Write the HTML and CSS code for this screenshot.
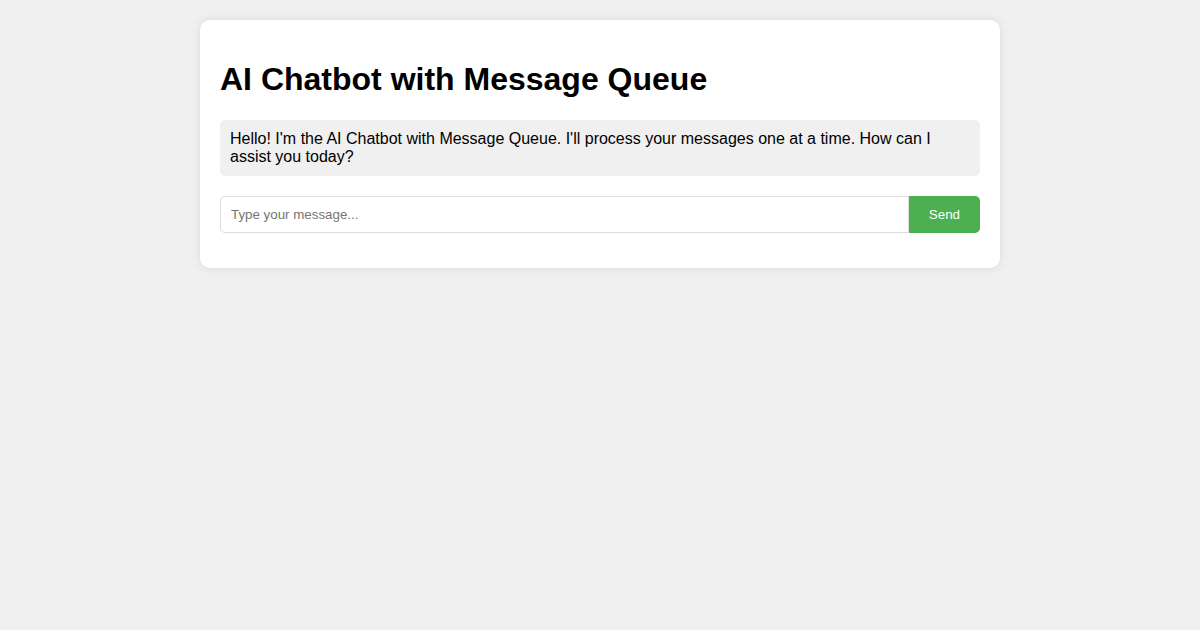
FILE: index.html
```html
<!DOCTYPE html>
<html>
<head>
<meta charset="utf-8">
<link rel="stylesheet" href="styles.css">
</head>
<body>
<div class="container">
  <h1>AI Chatbot with Message Queue</h1>
  <div class="chat-box">
    <div class="message bot">Hello! I'm the AI Chatbot with Message Queue. I'll process your messages one at a time. How can I assist you today?</div>
  </div>
  <div class="input-row">
    <input type="text" class="msg-input" placeholder="Type your message...">
    <button class="send-btn">Send</button>
  </div>
  <div class="status"></div>
</div>
</body>
</html>
```
FILE: styles.css
```css
body {
  margin: 0;
  padding: 20px;
  background: #f0f0f0;
  font-family: "Liberation Sans", Arial, sans-serif;
}
.container {
  max-width: 800px;
  margin: 0 auto;
  background: #fff;
  padding: 20px;
  border-radius: 10px;
  box-shadow: 0 0 10px rgba(0,0,0,0.1);
  box-sizing: border-box;
}
h1 {
  font-size: 32px;
  margin: 21.44px 0;
}
.chat-box {
  margin-bottom: 20px;
}
.message {
  background: #f0f0f0;
  padding: 10px;
  border-radius: 5px;
  font-size: 16px;
  line-height: 18px;
}
.input-row {
  display: flex;
}
.msg-input {
  flex: 1;
  padding: 10px;
  border: 1px solid #ddd;
  border-radius: 5px 0 0 5px;
  font-family: "Liberation Sans", Arial, sans-serif;
  font-size: 13.33px;
  outline: none;
}
.send-btn {
  padding: 10px 20px;
  background: #4caf50;
  color: #fff;
  border: none;
  border-radius: 0 5px 5px 0;
  font-family: "Liberation Sans", Arial, sans-serif;
  font-size: 13.33px;
}
.status {
  height: 15px;
}
```
